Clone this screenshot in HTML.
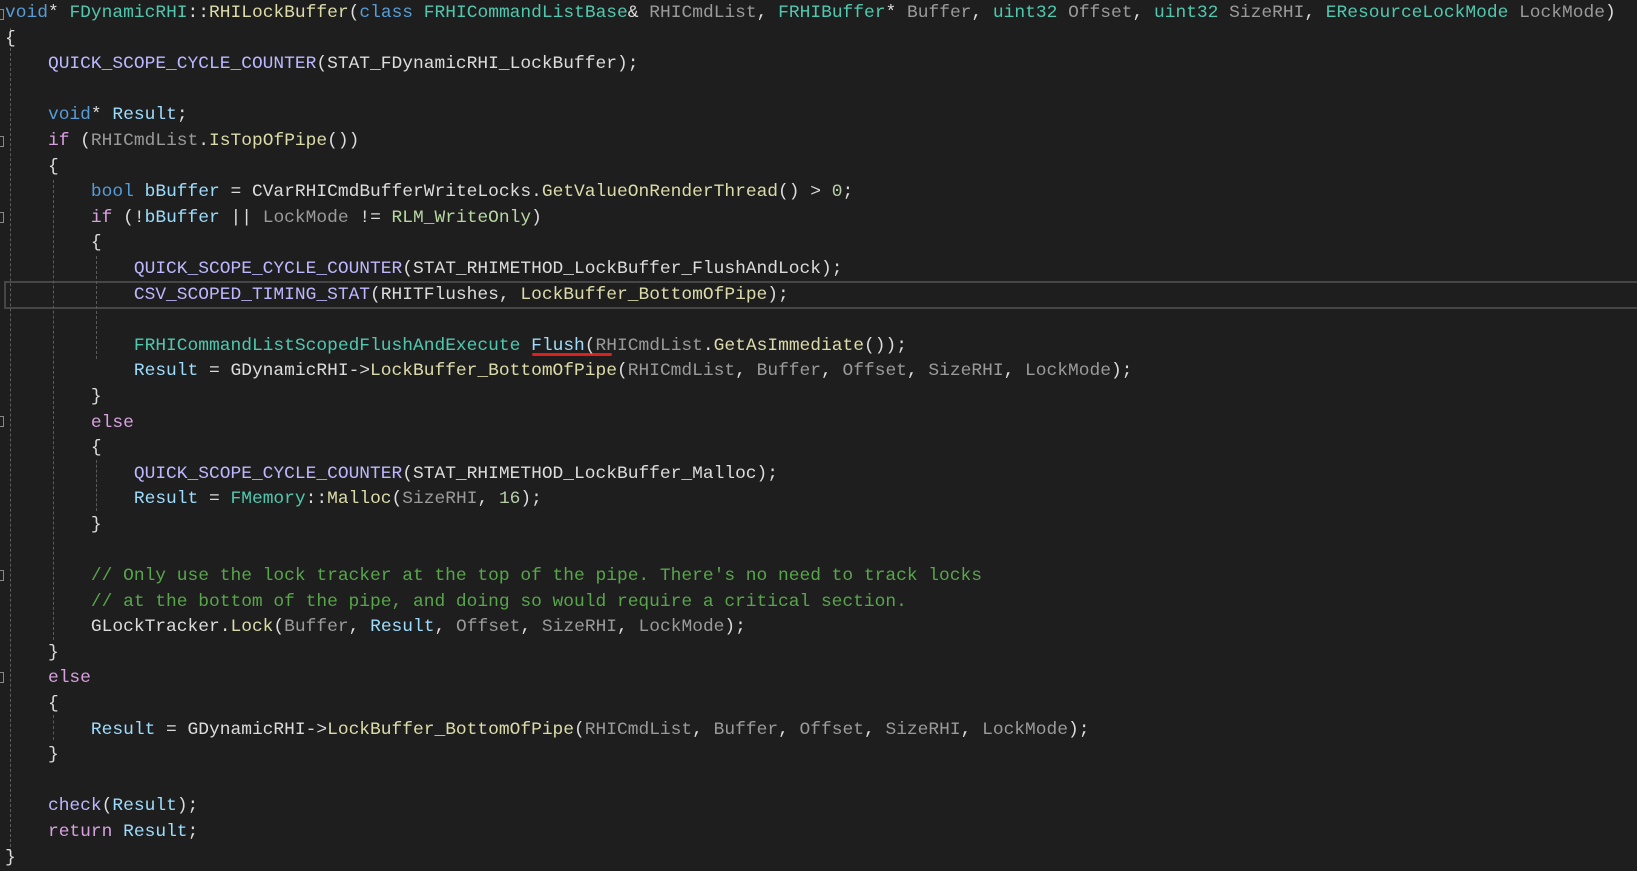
<!DOCTYPE html>
<html><head><meta charset="utf-8"><style>
html,body{margin:0;padding:0;background:#1e1e1e;width:1637px;height:852px;overflow:hidden}
pre{position:absolute;left:5px;top:1px;margin:0;font-family:"Liberation Mono",monospace;font-size:17.9px;line-height:25.6px;color:#dcdcdc;white-space:pre}
.k{color:#569cd6}.c{color:#d8a0df}.t{color:#4ec9b0}.f{color:#dcdcaa}.m{color:#beb7ff}.v{color:#9cdcfe}.p{color:#9a9a9a}.e{color:#b8d7a3}.n{color:#b5cea8}.g{color:#57a64a}
.guide{position:absolute;width:0;border-left:1px dashed #5a5a5a}
.fold{position:absolute;left:0;width:3px;height:9px;border:1px solid #888;border-left:none}
</style></head><body>
<div style="position:absolute;left:4px;top:281px;width:1640px;height:24px;border:2px solid #464646"></div>
<div class="guide" style="left:10px;top:28px;height:824px"></div>
<div class="guide" style="left:53px;top:180px;height:460px"></div>
<div class="guide" style="left:53px;top:715px;height:25px"></div>
<div class="guide" style="left:96px;top:256px;height:103px"></div>
<div class="guide" style="left:96px;top:460px;height:51px"></div>
<div class="fold" style="top:9px"></div>
<div class="fold" style="top:136px"></div>
<div class="fold" style="top:212px"></div>
<div class="fold" style="top:416px"></div>
<div class="fold" style="top:570px"></div>
<div class="fold" style="top:672px"></div>
<div style="position:absolute;left:532px;top:353px;width:80px;height:3px;background:#e0201c;border-radius:2px"></div>
<pre><span class="k">void</span>* <span class="t">FDynamicRHI</span>::<span class="f">RHILockBuffer</span>(<span class="k">class</span> <span class="t">FRHICommandListBase</span>&amp; <span class="p">RHICmdList</span>, <span class="t">FRHIBuffer</span>* <span class="p">Buffer</span>, <span class="t">uint32</span> <span class="p">Offset</span>, <span class="t">uint32</span> <span class="p">SizeRHI</span>, <span class="t">EResourceLockMode</span> <span class="p">LockMode</span>)
{
    <span class="m">QUICK_SCOPE_CYCLE_COUNTER</span>(STAT_FDynamicRHI_LockBuffer);

    <span class="k">void</span>* <span class="v">Result</span>;
    <span class="c">if</span> (<span class="p">RHICmdList</span>.<span class="f">IsTopOfPipe</span>())
    {
        <span class="k">bool</span> <span class="v">bBuffer</span> = CVarRHICmdBufferWriteLocks.<span class="f">GetValueOnRenderThread</span>() &gt; <span class="n">0</span>;
        <span class="c">if</span> (!<span class="v">bBuffer</span> || <span class="p">LockMode</span> != <span class="e">RLM_WriteOnly</span>)
        {
            <span class="m">QUICK_SCOPE_CYCLE_COUNTER</span>(STAT_RHIMETHOD_LockBuffer_FlushAndLock);
            <span class="m">CSV_SCOPED_TIMING_STAT</span>(RHITFlushes, <span class="f">LockBuffer_BottomOfPipe</span>);

            <span class="t">FRHICommandListScopedFlushAndExecute</span> <span class="v">Flush</span>(<span class="p">RHICmdList</span>.<span class="f">GetAsImmediate</span>());
            <span class="v">Result</span> = GDynamicRHI-&gt;<span class="f">LockBuffer_BottomOfPipe</span>(<span class="p">RHICmdList</span>, <span class="p">Buffer</span>, <span class="p">Offset</span>, <span class="p">SizeRHI</span>, <span class="p">LockMode</span>);
        }
        <span class="c">else</span>
        {
            <span class="m">QUICK_SCOPE_CYCLE_COUNTER</span>(STAT_RHIMETHOD_LockBuffer_Malloc);
            <span class="v">Result</span> = <span class="t">FMemory</span>::<span class="f">Malloc</span>(<span class="p">SizeRHI</span>, <span class="n">16</span>);
        }

        <span class="g">// Only use the lock tracker at the top of the pipe. There's no need to track locks</span>
        <span class="g">// at the bottom of the pipe, and doing so would require a critical section.</span>
        GLockTracker.<span class="f">Lock</span>(<span class="p">Buffer</span>, <span class="v">Result</span>, <span class="p">Offset</span>, <span class="p">SizeRHI</span>, <span class="p">LockMode</span>);
    }
    <span class="c">else</span>
    {
        <span class="v">Result</span> = GDynamicRHI-&gt;<span class="f">LockBuffer_BottomOfPipe</span>(<span class="p">RHICmdList</span>, <span class="p">Buffer</span>, <span class="p">Offset</span>, <span class="p">SizeRHI</span>, <span class="p">LockMode</span>);
    }

    <span class="m">check</span>(<span class="v">Result</span>);
    <span class="c">return</span> <span class="v">Result</span>;
}</pre>
</body></html>
